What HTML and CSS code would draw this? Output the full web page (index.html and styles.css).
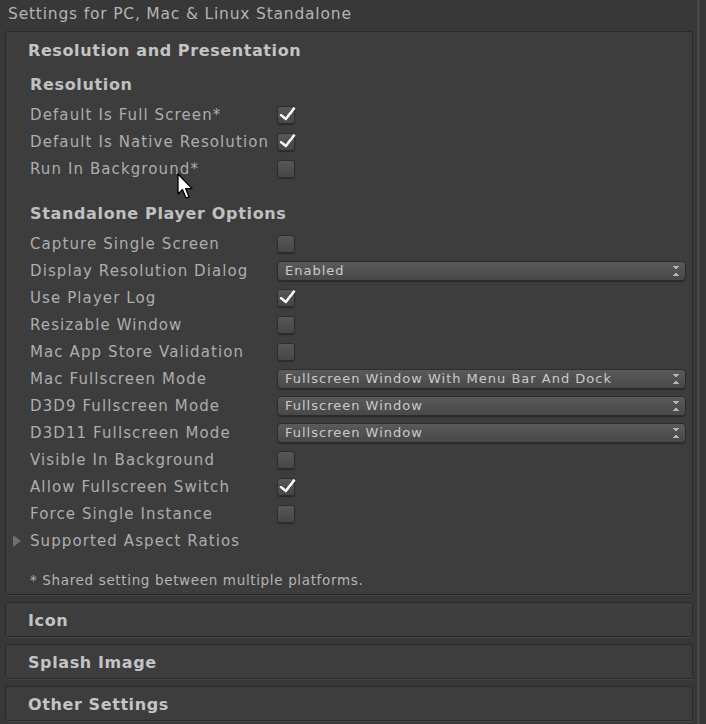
FILE: index.html
```html
<!DOCTYPE html>
<html lang="en">
<head>
  <meta charset="UTF-8" />
  <title>Player Settings</title>
  <link rel="stylesheet" href="styles.css">
</head>
<body>
  <div class="window">
    <div class="inspector">
      <div class="title">Settings for PC, Mac &amp; Linux Standalone</div>

      <!-- Resolution and Presentation -->
      <div class="panel open">
        <div class="panel-head">Resolution and Presentation</div>

        <div class="group-title">Resolution</div>
        <div class="row"><span class="label">Default Is Full Screen*</span><span class="check on"></span></div>
        <div class="row"><span class="label">Default Is Native Resolution</span><span class="check on"></span></div>
        <div class="row"><span class="label">Run In Background*</span><span class="check"></span></div>

        <div class="group-title second">Standalone Player Options</div>
        <div class="row"><span class="label">Capture Single Screen</span><span class="check"></span></div>
        <div class="row"><span class="label">Display Resolution Dialog</span><span class="popup">Enabled</span></div>
        <div class="row"><span class="label">Use Player Log</span><span class="check on"></span></div>
        <div class="row"><span class="label">Resizable Window</span><span class="check"></span></div>
        <div class="row"><span class="label">Mac App Store Validation</span><span class="check"></span></div>
        <div class="row"><span class="label">Mac Fullscreen Mode</span><span class="popup">Fullscreen Window With Menu Bar And Dock</span></div>
        <div class="row"><span class="label">D3D9 Fullscreen Mode</span><span class="popup">Fullscreen Window</span></div>
        <div class="row"><span class="label">D3D11 Fullscreen Mode</span><span class="popup">Fullscreen Window</span></div>
        <div class="row"><span class="label">Visible In Background</span><span class="check"></span></div>
        <div class="row"><span class="label">Allow Fullscreen Switch</span><span class="check on"></span></div>
        <div class="row"><span class="label">Force Single Instance</span><span class="check"></span></div>
        <div class="row foldout"><span class="arrow"></span><span class="label">Supported Aspect Ratios</span></div>

        <div class="note">* Shared setting between multiple platforms.</div>
      </div>

      <div class="panel"><div class="panel-head">Icon</div></div>
      <div class="panel"><div class="panel-head">Splash Image</div></div>
      <div class="panel"><div class="panel-head">Other Settings</div></div>
    </div>
    <div class="divider"></div>
    <div class="side"></div>
  </div>

  <!-- mouse pointer sitting over the list -->
  <svg class="cursor" width="18" height="28" viewBox="0 0 18 28">
    <path d="M1 1 L1 21 L5.5 16.5 L9 25 L12 23.8 L8.6 15.6 L15 15.6 Z" fill="#fff" stroke="#000" stroke-width="1.3" stroke-linejoin="round"/>
  </svg>
</body>
</html>
```

FILE: styles.css
```css
body {
  margin: 0;
  background: #383838;
  font-family: "DejaVu Sans", sans-serif;
  color: #b2b2b2;
  overflow: hidden;
}

.window {
  display: flex;
  height: 724px;
}

.inspector {
  width: 697px;
}

.divider {
  width: 3px;
  background: #474747;
}

.side {
  flex: 1;
  background: #363636;
}

.title {
  height: 31px;
  line-height: 28px;
  padding-left: 8px;
  font-size: 15.5px;
  letter-spacing: 0.8px;
  color: #b4b4b4;
}

.panel {
  margin: 0 4px 7px 5px;
  background: #3d3d3d;
  border: 1px solid #2a2a2a;
  border-radius: 2px;
  box-shadow: 0 1px 0 #444;
}

.panel.open {
  padding-top: 1px;
  padding-bottom: 5px;
}

.panel-head {
  height: 33px;
  line-height: 35px;
  padding-left: 22px;
  font-size: 16px;
  font-weight: bold;
  letter-spacing: 0.6px;
  color: #c4c4c4;
}

.panel.open .panel-head {
  height: 34px;
  line-height: 36px;
}

.group-title {
  height: 34px;
  line-height: 36px;
  padding-left: 24px;
  font-size: 16px;
  font-weight: bold;
  letter-spacing: 0.65px;
  color: #c0c0c0;
}

.group-title.second {
  margin-top: 14px;
}

.row {
  height: 27px;
  display: flex;
  align-items: center;
  padding-left: 24px;
}

.label {
  width: 247px;
  font-size: 15px;
  letter-spacing: 1.1px;
  color: #adadad;
  white-space: nowrap;
}

.check {
  width: 16px;
  height: 16px;
  border: 1px solid #2e2e2e;
  border-radius: 3px;
  background: linear-gradient(#575757, #464646);
  box-shadow: 0 1px 1px rgba(0, 0, 0, 0.35);
  position: relative;
}

.check.on::after {
  content: "";
  position: absolute;
  left: 5px;
  top: -3px;
  width: 6px;
  height: 13px;
  border: solid #f4f4f4;
  border-width: 0 3.5px 3.5px 0;
  border-radius: 1px;
  transform: rotate(38deg);
}

.popup {
  flex: 1;
  height: 18px;
  line-height: 18px;
  margin-right: 6px;
  padding-left: 7px;
  border: 1px solid #2c2c2c;
  border-radius: 4px;
  background: linear-gradient(#5a5a5a, #484848);
  box-shadow: 0 1px 1px rgba(0, 0, 0, 0.35);
  font-size: 13px;
  letter-spacing: 1px;
  color: #cacaca;
  position: relative;
}

.popup::after {
  content: "";
  position: absolute;
  right: 6px;
  top: 4px;
  width: 6px;
  height: 10px;
  background:
    linear-gradient(to top right, transparent 50%, #b4b4b4 50%) 0 0 / 3px 4px no-repeat,
    linear-gradient(to top left, transparent 50%, #b4b4b4 50%) 3px 0 / 3px 4px no-repeat,
    linear-gradient(to bottom right, transparent 50%, #b4b4b4 50%) 0 6px / 3px 4px no-repeat,
    linear-gradient(to bottom left, transparent 50%, #b4b4b4 50%) 3px 6px / 3px 4px no-repeat;
}

.foldout {
  padding-left: 7px;
}

.arrow {
  width: 0;
  height: 0;
  border-top: 6px solid transparent;
  border-bottom: 6px solid transparent;
  border-left: 8px solid #6e6e6e;
  margin-right: 9px;
}

.note {
  margin-top: 15px;
  height: 20px;
  line-height: 22px;
  padding-left: 24px;
  font-size: 13.5px;
  letter-spacing: 0.65px;
  color: #b4b4b4;
}

.cursor {
  position: absolute;
  left: 177px;
  top: 173px;
}
```
